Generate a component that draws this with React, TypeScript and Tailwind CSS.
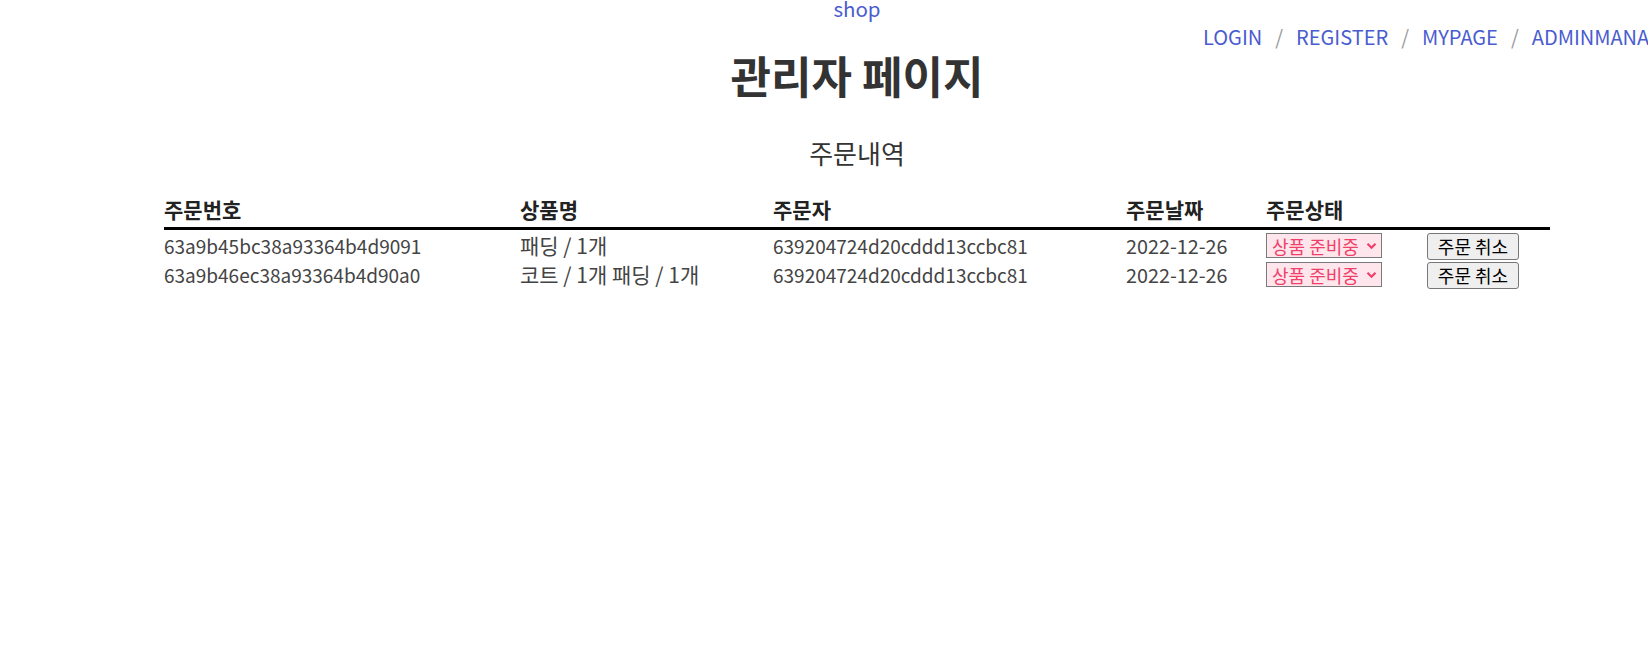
const FONT = "font-['Noto_Sans_CJK_KR','Noto_Sans',sans-serif]"

interface Order {
  id: string
  items: string
  buyer: string
  date: string
}

const ORDERS: Order[] = [
  { id: '63a9b45bc38a93364b4d9091', items: '패딩 / 1개', buyer: '639204724d20cddd13ccbc81', date: '2022-12-26' },
  { id: '63a9b46ec38a93364b4d90a0', items: '코트 / 1개 패딩 / 1개', buyer: '639204724d20cddd13ccbc81', date: '2022-12-26' },
]

const NAV = ['LOGIN', 'REGISTER', 'MYPAGE', 'ADMINMANAGE']

// 컬럼 폭 (px)
const COLS = 'grid grid-cols-[356px_253px_353px_140px_161px_123px]'

function StatusSelect() {
  return (
    <div className="flex items-center h-[25px] w-[116px] border border-[#7a7a7a] bg-[#ffe6ec] pl-[5px] pr-[4px] text-[18px] text-[#f0406a] leading-none">
      <span className="flex-1 whitespace-nowrap">상품 준비중</span>
      <svg width="11" height="8" viewBox="0 0 11 8" className="shrink-0">
        <path d="M1.5 1.8 L5.5 5.8 L9.5 1.8" fill="none" stroke="#f0406a" strokeWidth="2.2" />
      </svg>
    </div>
  )
}

export default function App() {
  return (
    <div className={`${FONT} w-[1648px] h-[664px] overflow-hidden bg-white text-[#333]`}>
      {/* Header */}
      <div className="w-[1714px] text-center text-[20.5px] leading-[16px] text-[#4a5cd0]">shop</div>
      <div className="pl-[1203px] mt-[8px] whitespace-nowrap text-[20px] leading-[26px] text-[#4a5cd0] flex">
        {NAV.map((n, i) => (
          <span key={n} className="flex">
            {i > 0 && <span className="px-[13px] text-[#9a9a9a]">/</span>}
            {n}
          </span>
        ))}
      </div>

      <h1 className="w-[1714px] text-center text-[44px] font-bold leading-[50px] text-[#333]">관리자 페이지</h1>

      <h2 className="w-[1714px] text-center text-[26px] leading-[32px] mt-[37px] text-[#333]">주문내역</h2>

      {/* Table */}
      <div className="ml-[164px] w-[1386px] mt-[25px] text-[21px]">
        <div className={`${COLS} font-bold leading-[30px] pb-[3px] border-b-[3px] border-black text-[#222]`}>
          <div>주문번호</div>
          <div>상품명</div>
          <div>주문자</div>
          <div>주문날짜</div>
          <div>주문상태</div>
          <div />
        </div>
        <div>
          {ORDERS.map(o => (
            <div key={o.id} className={`${COLS} items-center h-[29px] text-[#444]`}>
              <div className="text-[19px]">{o.id}</div>
              <div>{o.items}</div>
              <div className="text-[19px]">{o.buyer}</div>
              <div className="text-[19.8px]">{o.date}</div>
              <div><StatusSelect /></div>
              <div>
                <button className="h-[27px] w-[92px] border border-[#777] rounded-[3px] bg-[#efefef] text-[18px] text-black leading-none">
                  주문 취소
                </button>
              </div>
            </div>
          ))}
        </div>
      </div>
    </div>
  )
}
